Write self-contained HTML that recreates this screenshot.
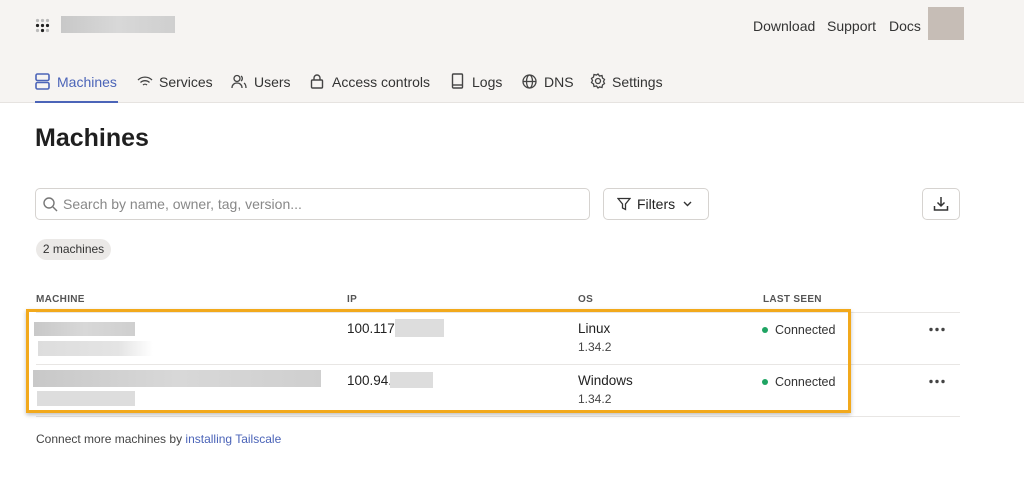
<!DOCTYPE html><html><head><style>
*{box-sizing:border-box;margin:0;padding:0}
body{width:1024px;height:503px;background:#fff;font-family:"Liberation Sans",sans-serif;color:#222;position:relative;overflow:hidden}
.a{position:absolute}
.hdr{left:0;top:0;width:1024px;height:103px;background:#f6f4f2;border-bottom:1px solid #e6e3e0}
.blur{background:linear-gradient(90deg,#c8c8c8,#d8d8d8,#cfcfcf)}
.nav{font-size:14px;color:#333;top:74px}
.th{font-size:10px;color:#555;letter-spacing:.3px;top:294px;font-weight:bold}
.t14{font-size:13.5px}
svg{position:absolute}
</style></head><body>
<div class="a hdr"></div>
<svg style="left:35px;top:18px" width="16" height="16"><g fill="#bbb"><circle cx="2.5" cy="2.5" r="1.6"/><circle cx="7.5" cy="2.5" r="1.6"/><circle cx="12.5" cy="2.5" r="1.6"/><circle cx="2.5" cy="12.5" r="1.6"/><circle cx="12.5" cy="12.5" r="1.6"/></g><g fill="#222"><circle cx="2.5" cy="7.5" r="1.6"/><circle cx="7.5" cy="7.5" r="1.6"/><circle cx="12.5" cy="7.5" r="1.6"/><circle cx="7.5" cy="12.5" r="1.6"/></g></svg>
<div class="a blur" style="left:61px;top:16px;width:114px;height:17px"></div>
<div class="a" style="left:753px;top:18px;font-size:14px;color:#333">Download</div>
<div class="a" style="left:827px;top:18px;font-size:14px;color:#333">Support</div>
<div class="a" style="left:889px;top:18px;font-size:14px;color:#333">Docs</div>
<div class="a" style="left:928px;top:7px;width:36px;height:33px;background:#c6bdb6"></div>
<svg style="left:35px;top:73px" width="15" height="17" fill="none" stroke="#4b64b8" stroke-width="1.6"><rect x="1" y="1" width="13" height="6.5" rx="1.5"/><rect x="1" y="9.5" width="13" height="6.5" rx="1.5"/></svg>
<div class="a nav" style="left:57px;color:#4b64b8">Machines</div>
<div class="a" style="left:35px;top:101px;width:83px;height:2px;background:#4b64b8"></div>
<svg style="left:137px;top:75px" width="16" height="13" fill="none" stroke="#444" stroke-width="1.3"><path d="M1 5a10 10 0 0 1 14 0M3.5 7.5a6.5 6.5 0 0 1 9 0M6 10a3 3 0 0 1 4 0"/></svg>
<div class="a nav" style="left:159px">Services</div>
<svg style="left:231px;top:74px" width="16" height="15" fill="none" stroke="#444" stroke-width="1.3"><circle cx="6" cy="4.5" r="3"/><path d="M1 14c0-3 2-5 5-5s5 2 5 5M10 2a3 3 0 0 1 0 5M13 9c1.5 1 2 3 2 5"/></svg>
<div class="a nav" style="left:254px">Users</div>
<svg style="left:310px;top:73px" width="14" height="16" fill="none" stroke="#444" stroke-width="1.4"><rect x="1.5" y="7" width="11" height="8" rx="1"/><path d="M4 7V5a3 3 0 0 1 6 0v2"/></svg>
<div class="a nav" style="left:332px">Access controls</div>
<svg style="left:451px;top:73px" width="13" height="16" fill="none" stroke="#444" stroke-width="1.4"><rect x="1.5" y="1" width="10" height="14" rx="1"/><path d="M1.5 12h10"/></svg>
<div class="a nav" style="left:472px">Logs</div>
<svg style="left:522px;top:74px" width="15" height="15" fill="none" stroke="#444" stroke-width="1.3"><circle cx="7.5" cy="7.5" r="6.5"/><ellipse cx="7.5" cy="7.5" rx="3" ry="6.5"/><path d="M1 7.5h13"/></svg>
<div class="a nav" style="left:544px">DNS</div>
<svg style="left:590px;top:73px" width="16" height="16" fill="none" stroke="#444" stroke-width="1.3"><circle cx="8" cy="8" r="2.5"/><path d="M8 1l1.5 2 2.5-.5.5 2.5 2 1.5-1 2 1 2-2 1.5-.5 2.5-2.5-.5L8 15l-1.5-2-2.5.5-.5-2.5-2-1.5 1-2-1-2 2-1.5.5-2.5 2.5.5z"/></svg>
<div class="a nav" style="left:612px">Settings</div>
<div class="a" style="left:35px;top:124px;font-size:25px;font-weight:bold;color:#1f1f1f">Machines</div>
<div class="a" style="left:35px;top:188px;width:555px;height:32px;border:1px solid #d6d3d0;border-radius:5px"></div>
<svg style="left:43px;top:197px" width="15" height="15" fill="none" stroke="#777" stroke-width="1.4"><circle cx="6" cy="6" r="5"/><path d="M10 10l4 4"/></svg>
<div class="a" style="left:63px;top:196px;font-size:14px;color:#888">Search by name, owner, tag, version...</div>
<div class="a" style="left:603px;top:188px;width:106px;height:32px;border:1px solid #d6d3d0;border-radius:5px"></div>
<svg style="left:617px;top:197px" width="14" height="14" fill="none" stroke="#333" stroke-width="1.3"><path d="M1 1.5h12L8.5 7v5.5l-3-1.5V7z"/></svg>
<div class="a" style="left:637px;top:196px;font-size:14px;color:#222">Filters</div>
<svg style="left:683px;top:201px" width="9" height="6" fill="none" stroke="#333" stroke-width="1.4"><path d="M1 1l3.5 3.5L8 1"/></svg>
<div class="a" style="left:922px;top:188px;width:38px;height:32px;border:1px solid #d6d3d0;border-radius:5px"></div>
<svg style="left:933px;top:196px" width="16" height="16" fill="none" stroke="#333" stroke-width="1.5"><path d="M8 1v9M4.5 6.5L8 10l3.5-3.5M1.5 10v4h13v-4"/></svg>
<div class="a" style="left:36px;top:239px;width:75px;height:21px;background:#ebe9e7;border-radius:11px;font-size:12px;color:#333;text-align:center;line-height:21px">2 machines</div>
<div class="a th" style="left:36px">MACHINE</div>
<div class="a th" style="left:347px">IP</div>
<div class="a th" style="left:578px">OS</div>
<div class="a th" style="left:763px">LAST SEEN</div>
<div class="a" style="left:36px;top:312px;width:924px;height:1px;background:#e8e6e4"></div>
<div class="a" style="left:36px;top:364px;width:924px;height:1px;background:#e8e6e4"></div>
<div class="a" style="left:36px;top:416px;width:924px;height:1px;background:#e8e6e4"></div>
<div class="a" style="left:26px;top:309px;width:825px;height:104px;border:3px solid #f2a91c;box-shadow:0 2px 4px rgba(0,0,0,.25)"></div>
<div class="a blur" style="left:34px;top:322px;width:101px;height:14px"></div>
<div class="a" style="left:38px;top:341px;width:115px;height:15px;background:linear-gradient(90deg,#ddd,#e4e4e4 70%,#fff)"></div>
<div class="a blur" style="left:33px;top:370px;width:288px;height:17px"></div>
<div class="a" style="left:37px;top:391px;width:98px;height:15px;background:#ddd"></div>
<div class="a t14" style="left:347px;top:321px">100.117.</div>
<div class="a" style="left:395px;top:319px;width:49px;height:18px;background:#ddd"></div>
<div class="a t14" style="left:347px;top:373px">100.94.</div>
<div class="a" style="left:390px;top:372px;width:43px;height:16px;background:#ddd"></div>
<div class="a t14" style="left:578px;top:321px">Linux</div>
<div class="a" style="left:578px;top:340px;font-size:12px;color:#444">1.34.2</div>
<div class="a t14" style="left:578px;top:373px">Windows</div>
<div class="a" style="left:578px;top:392px;font-size:12px;color:#444">1.34.2</div>
<div class="a" style="left:762px;top:327px;width:6px;height:6px;border-radius:50%;background:#1fa463"></div>
<div class="a" style="left:775px;top:323px;font-size:12.5px;color:#333">Connected</div>
<div class="a" style="left:762px;top:379px;width:6px;height:6px;border-radius:50%;background:#1fa463"></div>
<div class="a" style="left:775px;top:375px;font-size:12.5px;color:#333">Connected</div>
<svg style="left:929px;top:327px" width="16" height="5" fill="#444"><circle cx="2" cy="2.5" r="1.7"/><circle cx="8" cy="2.5" r="1.7"/><circle cx="14" cy="2.5" r="1.7"/></svg>
<svg style="left:929px;top:379px" width="16" height="5" fill="#444"><circle cx="2" cy="2.5" r="1.7"/><circle cx="8" cy="2.5" r="1.7"/><circle cx="14" cy="2.5" r="1.7"/></svg>
<div class="a" style="left:36px;top:432px;font-size:12px;color:#444">Connect more machines by <span style="color:#4b64b8">installing Tailscale</span></div>
</body></html>
